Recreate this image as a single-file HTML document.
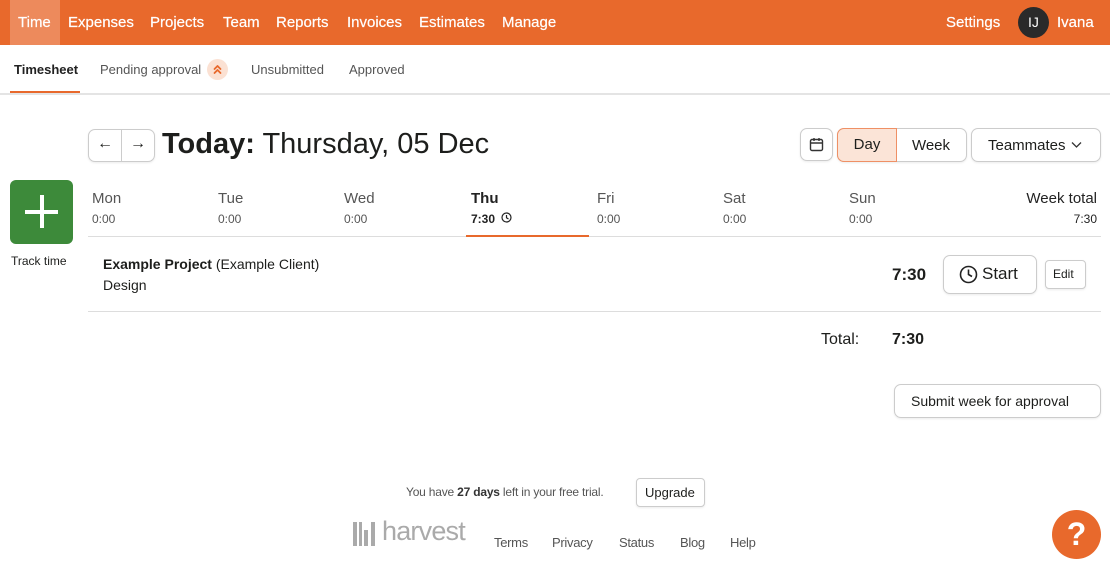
<!DOCTYPE html>
<html><head><style>
*{margin:0;padding:0;box-sizing:border-box}
body{width:1110px;height:564px;overflow:hidden;background:#fff;font-family:"Liberation Sans",sans-serif;color:#1d1e1c;position:relative}
.a{position:absolute;white-space:nowrap}
.top{position:absolute;left:0;top:0;width:1110px;height:45px;background:#e8692c}
.top span{position:absolute;top:14px;color:#fff;font-size:15px;font-weight:500;-webkit-text-stroke:0.2px #fff}
.btn{position:absolute;border:1px solid #ccc;border-radius:7px;background:#fff;box-shadow:0 1px 2px rgba(0,0,0,.08)}
.d{position:absolute;font-size:15px;color:#555}
.d small{display:block;font-size:12px;margin-top:5px;color:#555}
</style></head><body>
<div class="top">
<div style="position:absolute;left:10px;top:0;width:50px;height:45px;background:#ed8a5c"></div>
<span style="left:18px">Time</span>
<span style="left:68px">Expenses</span>
<span style="left:150px">Projects</span>
<span style="left:223px">Team</span>
<span style="left:276px">Reports</span>
<span style="left:347px">Invoices</span>
<span style="left:419px">Estimates</span>
<span style="left:502px">Manage</span>
<span style="left:946px">Settings</span>
<div style="position:absolute;left:1018px;top:7px;width:31px;height:31px;border-radius:50%;background:#2a2a2a;color:#fff;font-size:14px;text-align:center;line-height:31px">IJ</div>
<span style="left:1057px">Ivana</span>
</div>
<div class="a" style="left:14px;top:62px;font-size:13px;font-weight:bold;color:#222">Timesheet</div>
<div class="a" style="left:10px;top:91px;width:70px;height:3px;background:#e8692c"></div>
<div class="a" style="left:100px;top:62px;font-size:13px;color:#555">Pending approval</div>
<div class="a" style="left:207px;top:59px;width:21px;height:21px;border-radius:50%;background:#fbe1d3"></div>
<svg class="a" style="left:212px;top:64px" width="11" height="11" viewBox="0 0 11 11" fill="none" stroke="#e8692c" stroke-width="1.8" stroke-linecap="round" stroke-linejoin="round"><path d="M2.5 5l3-3 3 3M2.5 9l3-3 3 3"/></svg>
<div class="a" style="left:251px;top:62px;font-size:13px;color:#555">Unsubmitted</div>
<div class="a" style="left:349px;top:62px;font-size:13px;color:#555">Approved</div>
<div class="a" style="left:0;top:93px;width:1110px;height:2px;background:#e4e4e4"></div>

<div class="btn" style="left:88px;top:129px;width:67px;height:33px"></div>
<div class="a" style="left:121px;top:129px;width:1px;height:33px;background:#ccc"></div>
<div class="a" style="left:97px;top:135px;font-size:16px">←</div>
<div class="a" style="left:130px;top:135px;font-size:16px">→</div>
<div class="a" style="left:162px;top:128px;font-size:29px"><b>Today:</b> Thursday, 05 Dec</div>

<div class="btn" style="left:800px;top:128px;width:33px;height:33px"></div>
<svg class="a" style="left:809px;top:137px" width="15" height="15" viewBox="0 0 15 15" fill="none" stroke="#333" stroke-width="1.4"><rect x="1.5" y="2.5" width="12" height="11" rx="1.5"/><path d="M1.5 6h12M5 1v3M10 1v3"/></svg>
<div class="btn" style="left:837px;top:128px;width:130px;height:34px"></div>
<div class="a" style="left:837px;top:128px;width:60px;height:34px;background:#fbe4d7;border:1px solid #ef9065;border-radius:7px 0 0 7px;font-size:15px;text-align:center;line-height:32px">Day</div>
<div class="a" style="left:897px;top:137px;width:68px;text-align:center;font-size:15px">Week</div>
<div class="btn" style="left:971px;top:128px;width:130px;height:34px"></div>
<div class="a" style="left:988px;top:137px;font-size:15px">Teammates</div>
<svg class="a" style="left:1071px;top:141px" width="11" height="8" viewBox="0 0 11 8" fill="none" stroke="#333" stroke-width="1.3"><path d="M1 1.5l4.5 4.5 4.5-4.5"/></svg>

<div class="a" style="left:10px;top:180px;width:63px;height:64px;border-radius:6px;background:#3d8a3a"></div>
<div class="a" style="left:25px;top:210px;width:33px;height:4px;background:#fff"></div>
<div class="a" style="left:40px;top:195px;width:4px;height:33px;background:#fff"></div>
<div class="a" style="left:11px;top:254px;font-size:12px">Track time</div>

<div class="d" style="left:92px;top:190px">Mon<small>0:00</small></div>
<div class="d" style="left:218px;top:190px">Tue<small>0:00</small></div>
<div class="d" style="left:344px;top:190px">Wed<small>0:00</small></div>
<div class="d" style="left:471px;top:190px;color:#222;font-weight:bold">Thu<small style="color:#222">7:30</small></div>
<svg class="a" style="left:501px;top:212px" width="11" height="11" viewBox="0 0 11 11" fill="none" stroke="#222" stroke-width="1.2"><circle cx="5.5" cy="5.5" r="4.5"/><path d="M5.5 3v2.8l2 1.2"/></svg>
<div class="d" style="left:597px;top:190px">Fri<small>0:00</small></div>
<div class="d" style="left:723px;top:190px">Sat<small>0:00</small></div>
<div class="d" style="left:849px;top:190px">Sun<small>0:00</small></div>
<div class="d" style="left:1000px;top:190px;width:97px;text-align:right;color:#222">Week total<small style="color:#222">7:30</small></div>
<div class="a" style="left:88px;top:236px;width:1013px;height:1px;background:#ddd"></div>
<div class="a" style="left:466px;top:235px;width:123px;height:2px;background:#e8692c"></div>

<div class="a" style="left:103px;top:256px;font-size:14px"><b>Example Project</b> (Example Client)</div>
<div class="a" style="left:103px;top:277px;font-size:14px">Design</div>
<div class="a" style="left:892px;top:265px;font-size:17px;font-weight:bold">7:30</div>
<div class="btn" style="left:943px;top:255px;width:94px;height:39px"></div>
<svg class="a" style="left:959px;top:265px" width="19" height="19" viewBox="0 0 19 19" fill="none" stroke="#222" stroke-width="1.6"><circle cx="9.5" cy="9.5" r="8"/><path d="M9.5 4.5v5l3.5 2"/></svg>
<div class="a" style="left:982px;top:264px;font-size:17px">Start</div>
<div class="btn" style="left:1045px;top:260px;width:41px;height:29px;border-radius:4px"></div>
<div class="a" style="left:1053px;top:267px;font-size:12px">Edit</div>
<div class="a" style="left:88px;top:311px;width:1013px;height:1px;background:#ddd"></div>
<div class="a" style="left:821px;top:331px;font-size:16px">Total:</div>
<div class="a" style="left:892px;top:331px;font-size:16px;font-weight:bold">7:30</div>
<div class="btn" style="left:894px;top:384px;width:207px;height:34px"></div>
<div class="a" style="left:911px;top:393px;font-size:14px">Submit week for approval</div>

<div class="a" style="left:406px;top:485px;font-size:12px;color:#555;letter-spacing:-0.2px">You have <b style="color:#333">27 days</b> left in your free trial.</div>
<div class="btn" style="left:636px;top:478px;width:69px;height:29px;border-radius:4px"></div>
<div class="a" style="left:645px;top:485px;font-size:13px">Upgrade</div>
<div class="a" style="left:353px;top:522px;width:4px;height:24px;background:#aaa"></div>
<div class="a" style="left:359px;top:522px;width:3px;height:24px;background:#aaa"></div>
<div class="a" style="left:364px;top:530px;width:4px;height:16px;background:#aaa"></div>
<div class="a" style="left:371px;top:522px;width:4px;height:24px;background:#aaa"></div>
<div class="a" style="left:382px;top:516px;font-size:27px;color:#aaa;letter-spacing:-0.8px">harvest</div>
<div class="a" style="left:494px;top:535px;font-size:13px;color:#555;letter-spacing:-0.3px">Terms</div>
<div class="a" style="left:552px;top:535px;font-size:13px;color:#555;letter-spacing:-0.3px">Privacy</div>
<div class="a" style="left:619px;top:535px;font-size:13px;color:#555;letter-spacing:-0.3px">Status</div>
<div class="a" style="left:680px;top:535px;font-size:13px;color:#555;letter-spacing:-0.3px">Blog</div>
<div class="a" style="left:730px;top:535px;font-size:13px;color:#555;letter-spacing:-0.3px">Help</div>
<div class="a" style="left:1052px;top:510px;width:49px;height:49px;border-radius:50%;background:#e8692c;color:#fff;font-size:32px;font-weight:bold;text-align:center;line-height:49px">?</div>
</body></html>
